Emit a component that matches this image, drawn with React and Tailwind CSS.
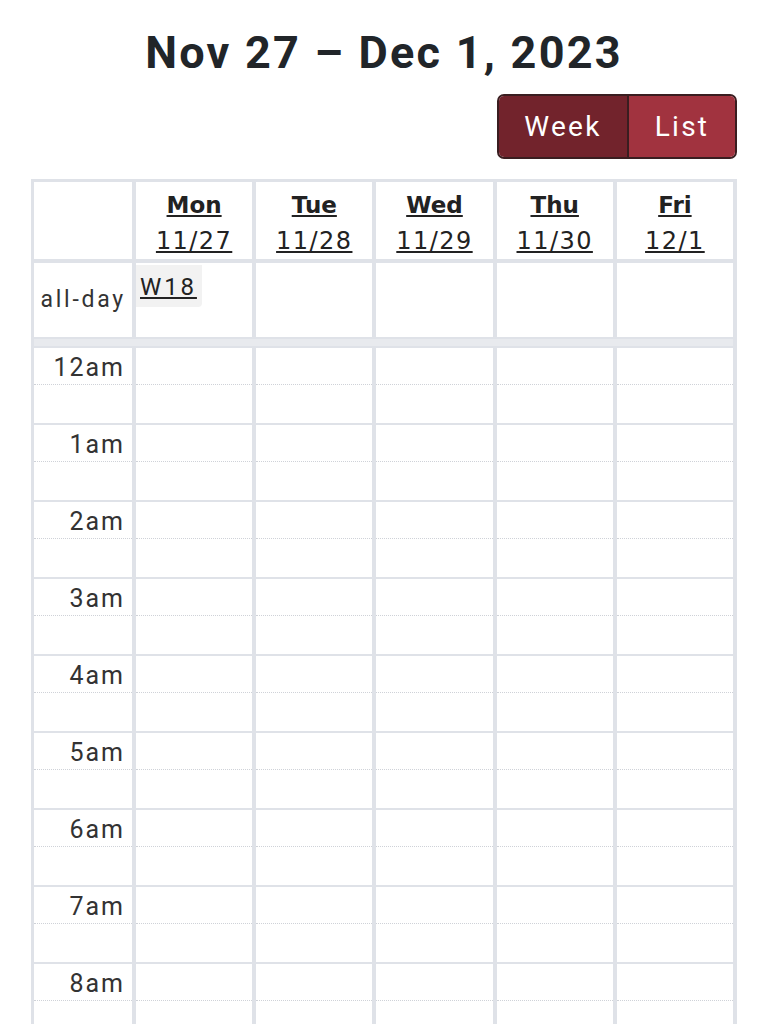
const days = [
  { name: 'Mon', date: '11/27' },
  { name: 'Tue', date: '11/28' },
  { name: 'Wed', date: '11/29' },
  { name: 'Thu', date: '11/30' },
  { name: 'Fri', date: '12/1' },
];

// only the morning fits on screen
const hours = ['12am', '1am', '2am', '3am', '4am', '5am', '6am', '7am', '8am'];

const cols = 'grid grid-cols-[98px_repeat(5,1fr)] gap-x-[4px]';

export default function App() {
  return (
    <div className="min-h-screen bg-white px-[31px] font-['Roboto',sans-serif] text-[#212529]">
      <h1 className="mt-[27px] text-center text-[45px] font-bold leading-[52px] tracking-[0.05em]">
        Nov 27 – Dec 1, 2023
      </h1>

      {/* view switcher */}
      <div className="mt-[15px] flex justify-end">
        <div className="flex overflow-hidden rounded-[7px] border-2 border-[#3a1d20]">
          <button className="h-[61px] w-[130px] border-r-2 border-[#3a1d20] bg-[#72232c] text-[28px] tracking-[0.08em] text-white">
            Week
          </button>
          <button className="h-[61px] w-[106px] bg-[#a1333f] text-[28px] tracking-[0.08em] text-white">
            List
          </button>
        </div>
      </div>

      {/* calendar */}
      <div className="mt-[20px] bg-[#dfe2e8] pt-[3px] pl-[3px] pr-[4px]">
        <div className={`${cols} h-[77px]`}>
          <div className="bg-white" />
          {days.map((d) => (
            <div key={d.name} className="bg-white pt-[5px] text-center font-['DejaVu_Sans',sans-serif] leading-[36px] text-[#222]">
              <div className="text-[23px] font-bold underline">{d.name}</div>
              <div className="text-[24px] tracking-[0.06em] underline">{d.date}</div>
            </div>
          ))}
        </div>

        <div className={`${cols} mt-[4px] h-[74px]`}>
          <div className="flex items-center justify-end bg-white pr-[6px] text-[23px] tracking-[0.12em] text-[#333]">
            all-day
          </div>
          <div className="bg-white">
            <div className="mt-[2px] h-[42px] w-[66px] rounded-br-[4px] bg-[#f2f2f2] pl-[4px] pt-[8px] text-[24px] leading-[28px] tracking-[0.12em] text-[#222] underline">
              W18
            </div>
          </div>
          {days.slice(1).map((d) => (
            <div key={d.name} className="bg-white" />
          ))}
        </div>

        <div className="mt-[2px] h-[7px] bg-[#e8eaee]" />

        <div className="mt-[2px] flex flex-col gap-y-[2px]">
          {hours.map((h) => (
            <div key={h} className={`${cols} h-[75px]`}>
              <div className="bg-white">
                <div className="h-[37px] border-b border-dotted border-[#cfd2d8] pr-[7px] pt-[5px] text-right text-[25px] leading-[30px] tracking-[0.08em] text-[#333]">
                  {h}
                </div>
              </div>
              {days.map((d) => (
                <div key={d.name} className="bg-white">
                  <div className="h-[37px] border-b border-dotted border-[#cfd2d8]" />
                </div>
              ))}
            </div>
          ))}
        </div>
      </div>
    </div>
  );
}
